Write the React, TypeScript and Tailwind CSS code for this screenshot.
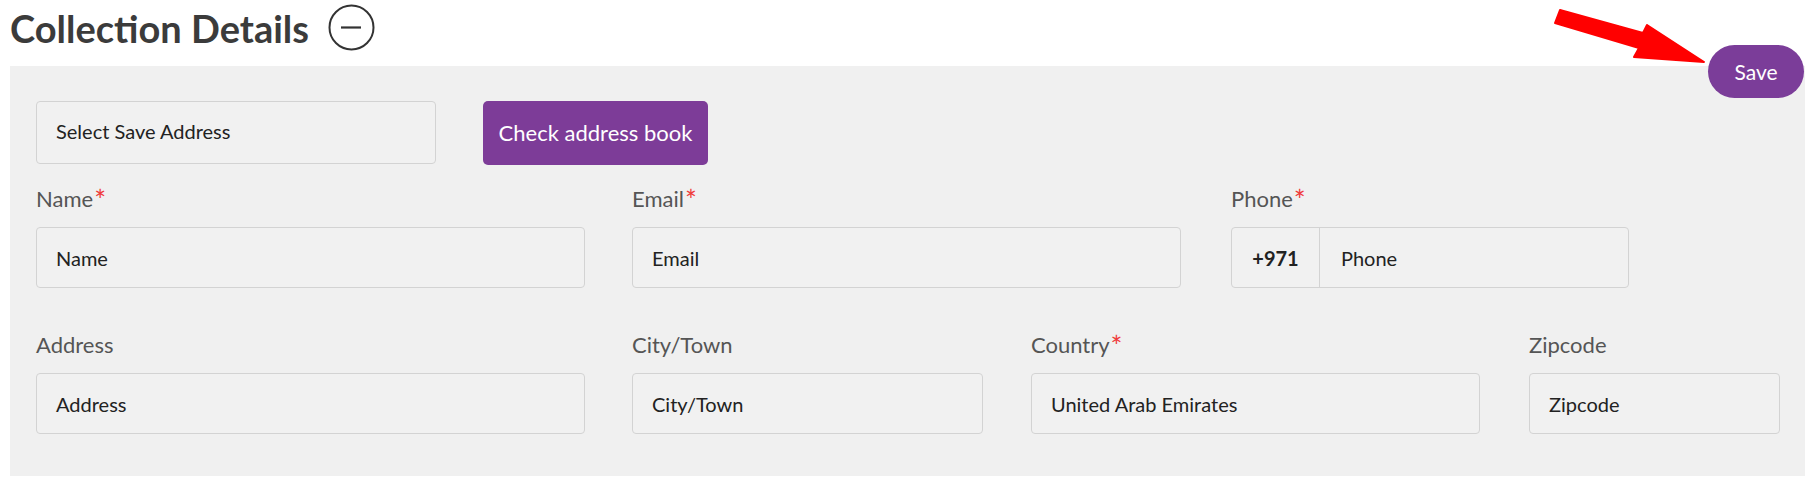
import React from 'react';

type FieldProps = {
  label: string;
  placeholder: string;
  required?: boolean;
  width: string;
  className?: string;
};

const Label = ({ text, required }: { text: string; required?: boolean }) => (
  <div className="h-[26px] text-[22px] leading-[26px] text-[#555555] flex items-start">
    {text}
    {required && <span className="text-[28px] leading-[28px] text-[#ef3b3b] ml-[1px]">*</span>}
  </div>
);

function Field({ label, placeholder, required, width, className = '' }: FieldProps) {
  return (
    <div className={`${width} ${className}`}>
      <Label text={label} required={required} />
      <div className="mt-[15px] h-[61px] flex items-center pl-[19px] bg-[#f1f1f1] border border-[#d3d3d3] rounded-[4px] text-[20px] text-[#222222]">
        {placeholder}
      </div>
    </div>
  );
}

function PhoneField() {
  return (
    <div className="w-[398px] ml-[50px]">
      <Label text="Phone" required />
      <div className="mt-[15px] h-[61px] flex bg-[#f1f1f1] border border-[#d3d3d3] rounded-[4px] text-[20px] text-[#222222]">
        <div className="w-[88px] flex items-center justify-center font-bold border-r border-[#d3d3d3]">+971</div>
        <div className="flex items-center pl-[21px]">Phone</div>
      </div>
    </div>
  );
}

export default function App() {
  return (
    <div className="relative w-[1812px] h-[481px] bg-white pl-[10px] pr-[7px] font-['Lato','Noto_Sans',sans-serif] overflow-hidden">
      <div className="flex items-center gap-[19px] pt-[4px] pb-[15px]">
        <h1 className="text-[38px] leading-[46px] font-bold text-[#3b3b3b]">Collection Details</h1>
        <svg width="47" height="47" viewBox="0 0 47 47" fill="none">
          <circle cx="23.5" cy="23.5" r="22" stroke="#333" strokeWidth="2" />
          <line x1="13" y1="23.5" x2="33" y2="23.5" stroke="#333" strokeWidth="2.2" />
        </svg>
      </div>

      <div className="relative h-[410px] bg-[#f0f0f0] pt-[35px] pl-[26px]">
        <button className="absolute right-[1px] top-[-21px] w-[96px] h-[53px] rounded-full bg-[#7b3d99] text-white text-[21px]">
          Save
        </button>

        <div className="flex items-start">
          <div className="w-[400px] h-[63px] flex items-center pl-[19px] pb-[3px] bg-[#f1f1f1] border border-[#d3d3d3] rounded-[4px] text-[20px] text-[#222222]">
            Select Save Address
          </div>
          <button className="ml-[47px] w-[225px] h-[64px] pb-[2px] rounded-[5px] bg-[#7d3c98] text-white text-[22px]">
            Check address book
          </button>
        </div>

        <div className="flex mt-[21px]">
          <Field label="Name" placeholder="Name" required width="w-[549px]" />
          <Field label="Email" placeholder="Email" required width="w-[549px]" className="ml-[47px]" />
          <PhoneField />
        </div>

        <div className="flex mt-[44px]">
          <Field label="Address" placeholder="Address" width="w-[549px]" />
          <Field label="City/Town" placeholder="City/Town" width="w-[351px]" className="ml-[47px]" />
          <Field label="Country" placeholder="United Arab Emirates" required width="w-[449px]" className="ml-[48px]" />
          <Field label="Zipcode" placeholder="Zipcode" width="w-[251px]" className="ml-[49px]" />
        </div>
      </div>

      <svg className="absolute left-[1540px] top-0" width="180" height="80" viewBox="0 0 180 80">
        <polygon
          points="20,10 103,33 107,25 164,62 94,57 99,48 15,23"
          fill="#ff0000"
          stroke="#ff0000"
          strokeWidth="2"
          strokeLinejoin="round"
        />
      </svg>
    </div>
  );
}
